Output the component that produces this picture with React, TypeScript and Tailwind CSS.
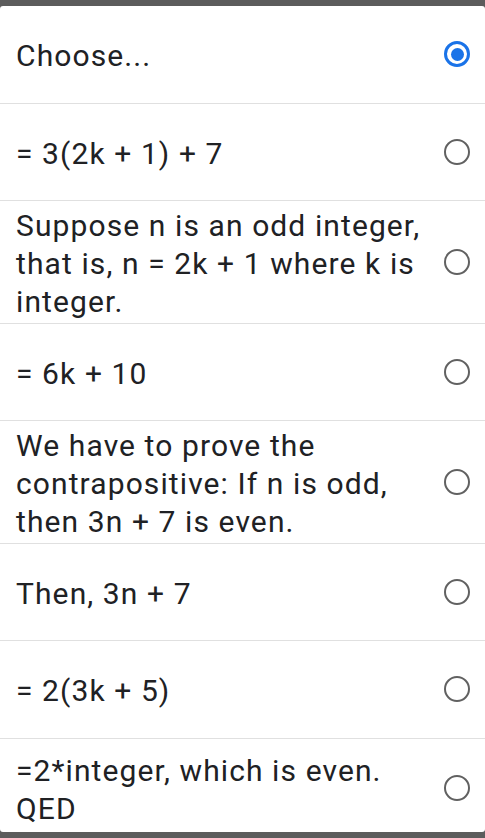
import React from 'react';

const options = [
  'Choose...',
  '= 3(2k + 1) + 7',
  'Suppose n is an odd integer, that is, n = 2k + 1 where k is integer.',
  '= 6k + 10',
  'We have to prove the contrapositive: If n is odd, then 3n + 7 is even.',
  'Then, 3n + 7',
  '= 2(3k + 5)',
  '=2*integer, which is even. QED',
];

function Radio({ checked }: { checked: boolean }) {
  if (checked) {
    return (
      <span className="flex h-[26px] w-[26px] items-center justify-center rounded-full border-[3px] border-[#1a73e8]">
        <span className="h-[13px] w-[13px] rounded-full bg-[#1a73e8]" />
      </span>
    );
  }
  return <span className="block h-[26px] w-[26px] rounded-full border-[2.5px] border-[#616161]" />;
}

export default function App() {
  const selected = 0;
  return (
    <div className="min-h-[838px] bg-[#5c5c5c] py-[6px] font-['Roboto',sans-serif]">
      <div className="h-[826px] overflow-hidden rounded-[3px] bg-white">
        {options.map((text, i) => {
          const last = i === options.length - 1;
          return (
            <div
              key={i}
              className={`flex min-h-[97.6px] items-center pb-[2px] pt-[5.5px] pl-[16px] pr-[15px] ${
                last ? '' : 'border-b border-[#e0e0e0]'
              }`}
            >
              <div className="mr-[10px] flex-1 text-[30px] leading-[38px] tracking-[1.1px] text-[#202124]">{text}</div>
              <span className="-mt-[4px]">
                <Radio checked={i === selected} />
              </span>
            </div>
          );
        })}
      </div>
    </div>
  );
}
